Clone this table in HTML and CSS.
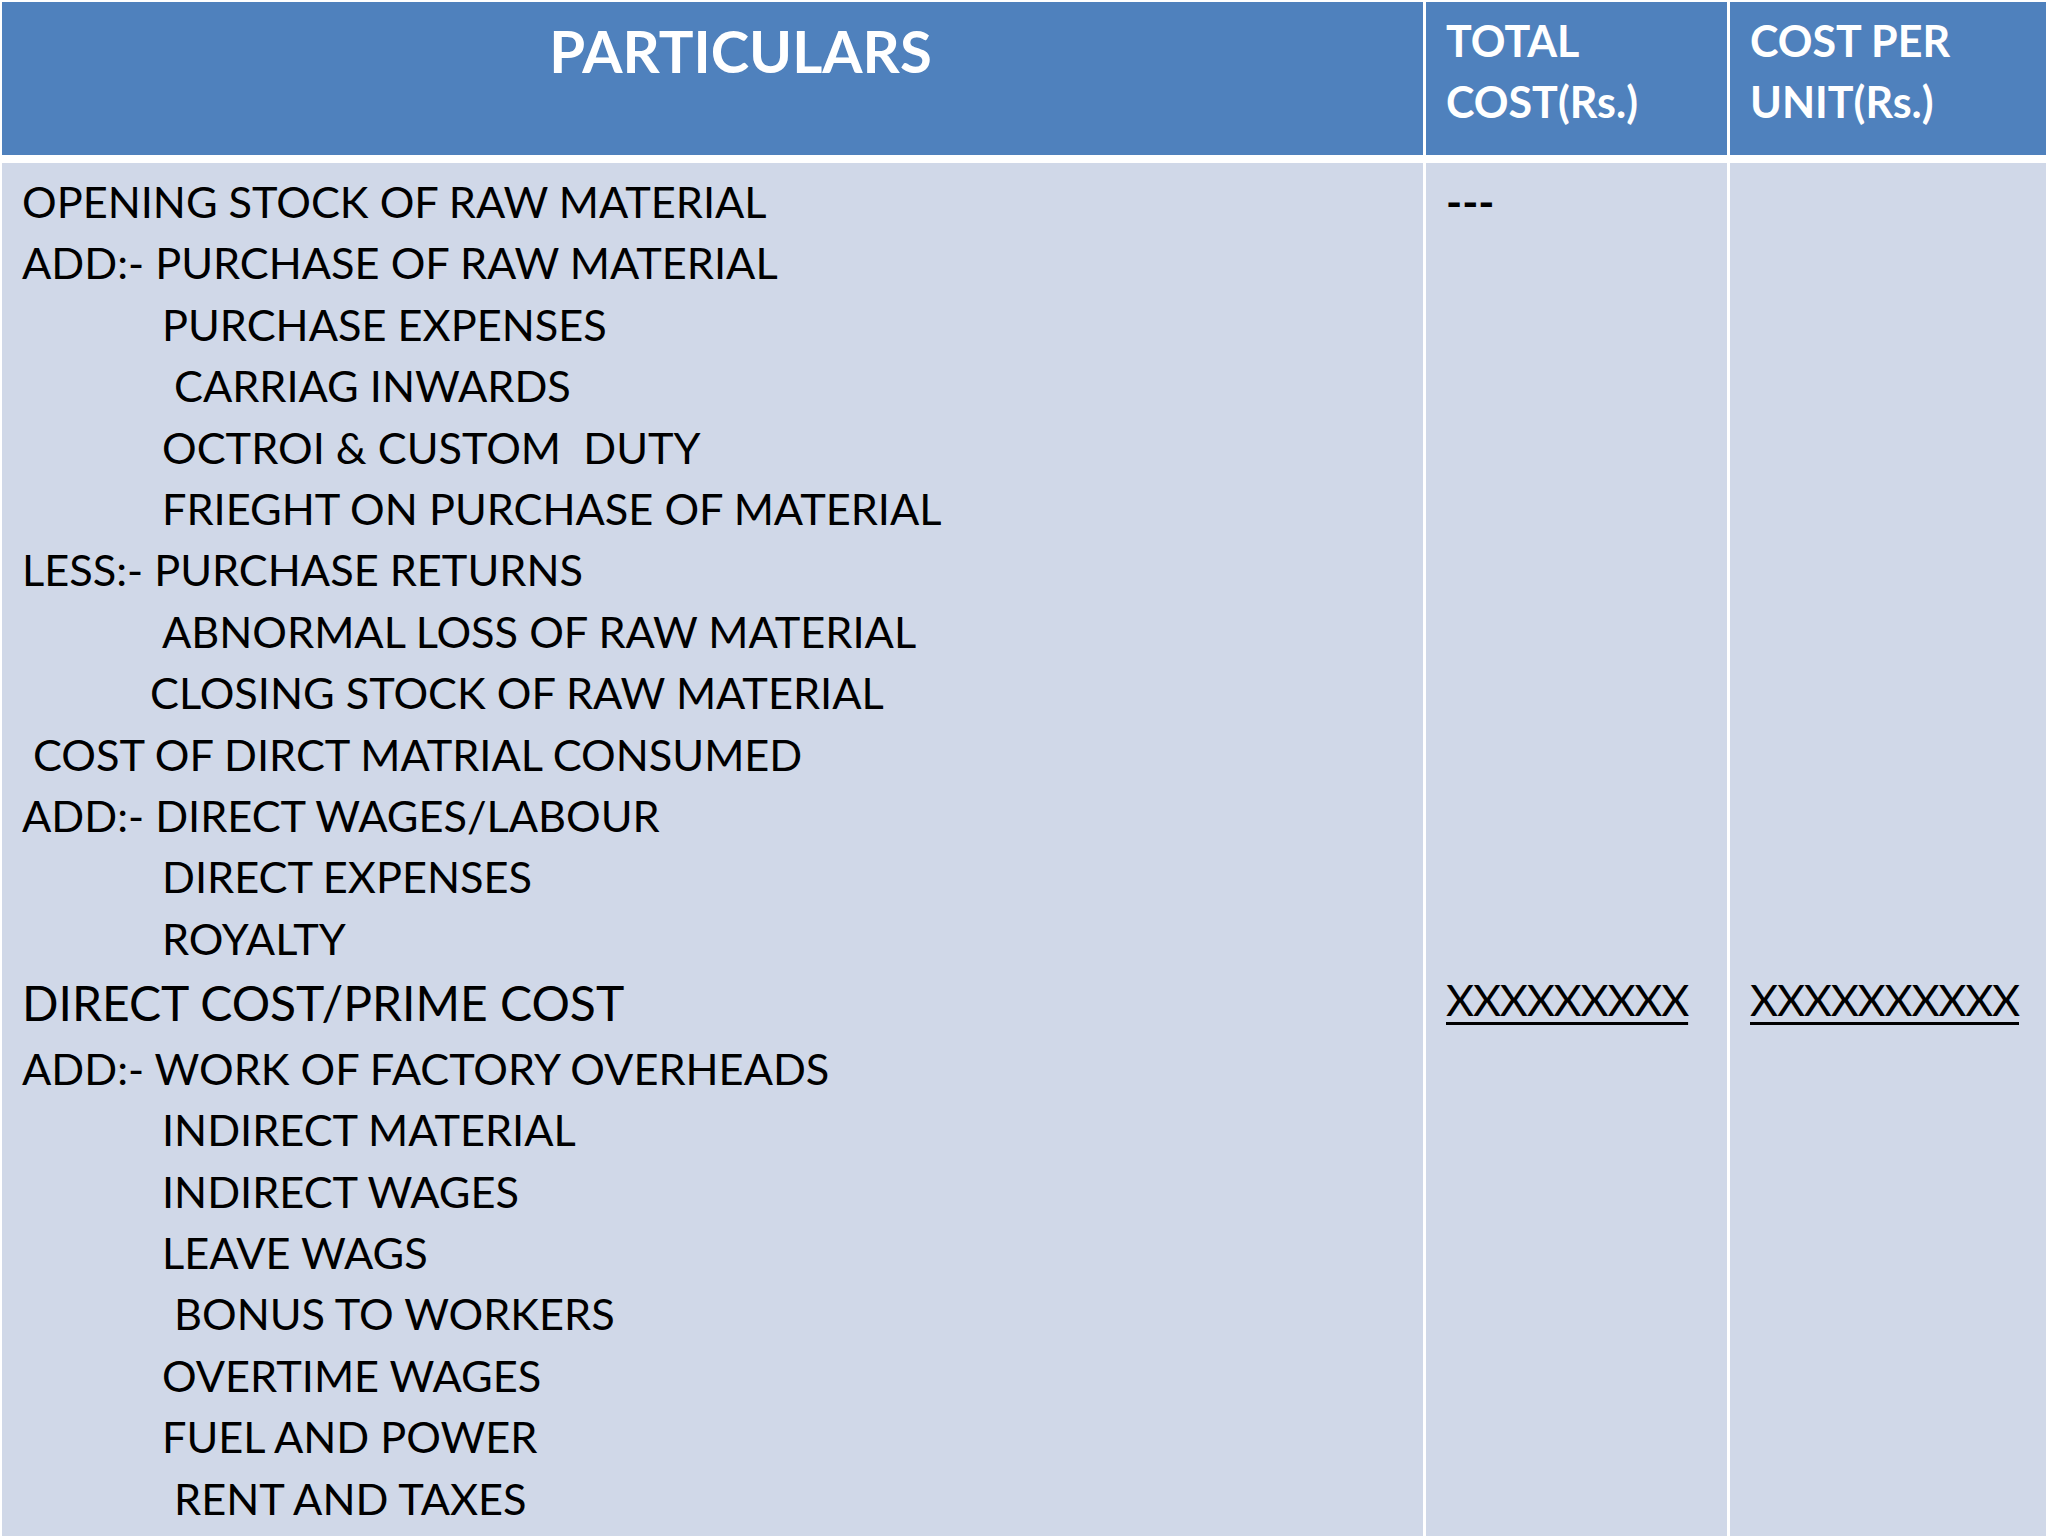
FILE: index.html
```html
<!DOCTYPE html>
<html lang="en">
<head>
<meta charset="utf-8">
<title>Cost Sheet</title>
<link rel="stylesheet" href="styles.css">
</head>
<body>
<div class="sheet">
  <div class="head head-part">PARTICULARS</div>
  <div class="head head-num">TOTAL COST(Rs.)</div>
  <div class="head head-num">COST PER UNIT(Rs.)</div>

  <div class="cell cell-part">
    <div class="line">OPENING STOCK OF RAW MATERIAL</div>
    <div class="line">ADD:- PURCHASE OF RAW MATERIAL</div>
    <div class="line ind">PURCHASE EXPENSES</div>
    <div class="line ind-s">CARRIAG INWARDS</div>
    <div class="line ind">OCTROI &amp; CUSTOM&nbsp; DUTY</div>
    <div class="line ind">FRIEGHT ON PURCHASE OF MATERIAL</div>
    <div class="line">LESS:- PURCHASE RETURNS</div>
    <div class="line ind">ABNORMAL LOSS OF RAW MATERIAL</div>
    <div class="line ind-c">CLOSING STOCK OF RAW MATERIAL</div>
    <div class="line ind-x">COST OF DIRCT MATRIAL CONSUMED</div>
    <div class="line">ADD:- DIRECT WAGES/LABOUR</div>
    <div class="line ind">DIRECT EXPENSES</div>
    <div class="line ind">ROYALTY</div>
    <div class="line line-big">DIRECT COST/PRIME COST</div>
    <div class="line">ADD:- WORK OF FACTORY OVERHEADS</div>
    <div class="line ind">INDIRECT MATERIAL</div>
    <div class="line ind">INDIRECT WAGES</div>
    <div class="line ind">LEAVE WAGS</div>
    <div class="line ind-s">BONUS TO WORKERS</div>
    <div class="line ind">OVERTIME WAGES</div>
    <div class="line ind">FUEL AND POWER</div>
    <div class="line ind-s">RENT AND TAXES</div>
  </div>

  <div class="cell cell-num">
    <div class="line dash">---</div>
    <div class="gap-lines"></div>
    <div class="line"><span class="total">XXXXXXXXX</span></div>
  </div>

  <div class="cell cell-num">
    <div class="line">&nbsp;</div>
    <div class="gap-lines"></div>
    <div class="line"><span class="total">XXXXXXXXXX</span></div>
  </div>
</div>
</body>
</html>
```

FILE: styles.css
```css
html, body {
  margin: 0;
  padding: 0;
  background: #ffffff;
}

body {
  width: 2048px;
  height: 1536px;
  overflow: hidden;
  font-family: "Lato", "Open Sans", sans-serif;
  color: #000000;
}

.sheet {
  display: grid;
  grid-template-columns: 1421px 301px 316px;
  grid-template-rows: 153px 1400px;
  column-gap: 3px;
  row-gap: 8px;
  margin: 2px 2px 0 2px;
}

.head {
  background: #4f81bd;
  color: #ffffff;
  font-weight: 700;
}

.head-part {
  font-size: 58px;
  line-height: 67px;
  text-align: center;
  padding: 15px 0 0 56px;
}

.head-num {
  font-size: 43px;
  line-height: 61.4px;
  padding: 8px 12px 0 20px;
}

.cell {
  background: #d0d8e8;
  padding-top: 8px;
}

.cell-part {
  padding-left: 20px;
}

.cell-num {
  padding-left: 20px;
}

.line {
  font-size: 43.3px;
  line-height: 61.4px;
  white-space: nowrap;
}

.line-big {
  font-size: 48px;
  line-height: 68.4px;
}

.ind { padding-left: 140px; }
.ind-s { padding-left: 152px; }
.ind-c { padding-left: 128px; }
.ind-x { padding-left: 11px; }

.dash {
  font-weight: 700;
}

.gap-lines {
  height: 736.8px;
}

.total {
  letter-spacing: -1.2px;
  text-decoration: underline;
  text-decoration-thickness: 3px;
  text-underline-offset: 6px;
}
```
